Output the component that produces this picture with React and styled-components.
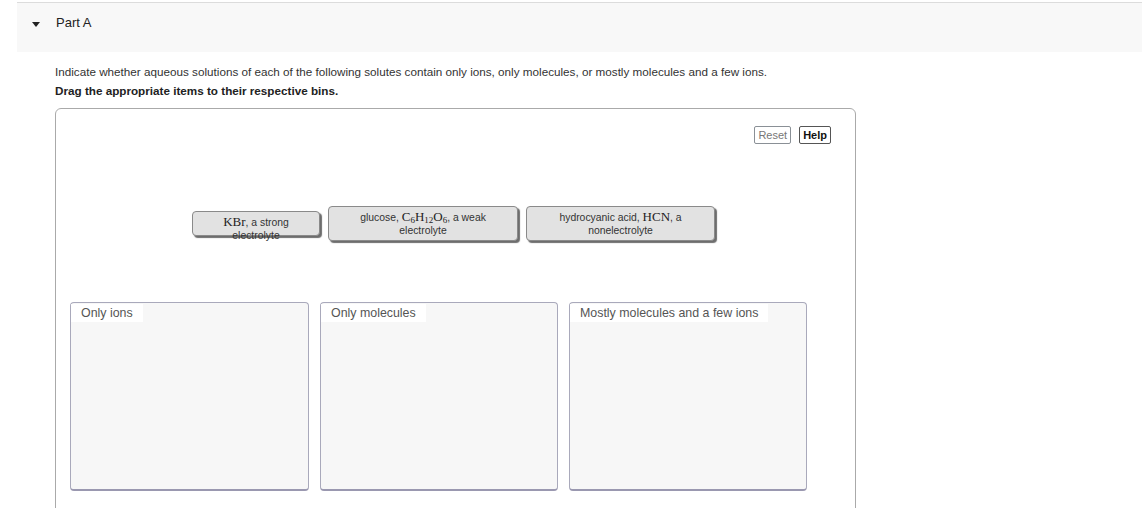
import React from "react";
import styled, { createGlobalStyle } from "styled-components";

const GlobalStyle = createGlobalStyle`
  body {
    margin: 0;
    background: #fff;
    font-family: "Liberation Sans", Arial, sans-serif;
    overflow: hidden;
  }
`;

const Page = styled.div`
  height: 507px;
  overflow: hidden;
  border-bottom: 1px solid #bdb9bd;
  padding-top: 2px;
  box-sizing: content-box;
`;

const Header = styled.div`
  margin-left: 17px;
  height: 50px;
  border-top: 1px solid #dcdcdc;
  background: #f8f8f8;
  display: flex;
  align-items: flex-start;
  padding-top: 12px;
  box-sizing: border-box;
`;

const Caret = styled.span`
  width: 0;
  height: 0;
  margin: 7px 0 0 15px;
  border-left: 4px solid transparent;
  border-right: 4px solid transparent;
  border-top: 5px solid #222;
`;

const Title = styled.h2`
  margin: 0 0 0 16px;
  font-size: 13px;
  font-weight: normal;
  line-height: 16px;
  color: #222;
`;

const Body = styled.div`
  padding: 13px 0 0 55px;
`;

const Text = styled.p`
  margin: 0 0 5px;
  font-size: 11.7px;
  line-height: 14px;
  color: ${(p) => (p.strong ? "#222" : "#333")};
  font-weight: ${(p) => (p.strong ? "bold" : "normal")};
`;

const Board = styled.div`
  margin-top: 10px;
  width: 801px;
  height: 430px;
  box-sizing: border-box;
  border: 1px solid #aaa;
  border-radius: 6px;
  padding: 17px 24px 0 14px;
`;

const Toolbar = styled.div`
  display: flex;
  justify-content: flex-end;
  gap: 8px;
`;

const ToolButton = styled.button`
  height: 18px;
  padding: 0 3px;
  font-family: "Liberation Sans", Arial, sans-serif;
  font-size: 11px;
  line-height: 16px;
  background: #fff;
  border: 1px solid ${(p) => (p.primary ? "#555" : "#8a9096")};
  border-radius: 2px;
  color: ${(p) => (p.primary ? "#111" : "#777")};
  font-weight: ${(p) => (p.primary ? "bold" : "normal")};
`;

const Tray = styled.div`
  display: flex;
  justify-content: center;
  align-items: center;
  gap: 8px;
  margin: 62px 0 0 6px;
  height: 35px;
`;

const Item = styled.div`
  width: ${(p) => p.w}px;
  height: ${(p) => p.h}px;
  box-sizing: border-box;
  padding: 3px 14px 0;
  background: #e2e2e2;
  border: 1px solid #8a8a8a;
  border-radius: 4px;
  box-shadow: 2px 2px 1px #6d6d6d;
  font-size: 10.4px;
  line-height: 13px;
  color: #333;
  text-align: center;
`;

const Math = styled.span`
  font-family: "Liberation Serif", "Times New Roman", serif;
  font-size: 13px;
  color: #222;
`;

const Sub = styled.sub`
  font-size: 9px;
  line-height: 0;
  vertical-align: -2px;
`;

const Bins = styled.div`
  display: flex;
  gap: 11px;
  margin-top: 61px;
`;

const Bin = styled.div`
  width: ${(p) => p.w}px;
  height: 189px;
  box-sizing: border-box;
  background: #f7f7f7;
  border: 1px solid #a9a9bb;
  border-bottom: 2px solid #9a98b0;
  border-radius: 4px;
`;

const BinLabel = styled.span`
  display: inline-block;
  background: #fff;
  padding: 0 10px;
  height: 18px;
  font-size: 12.4px;
  line-height: 18px;
  color: #555;
`;

export default function App() {
  return (
    <>
      <GlobalStyle />
      <Page>
        <Header>
          <Caret />
          <Title>Part A</Title>
        </Header>
        <Body>
          <Text>
            Indicate whether aqueous solutions of each of the following solutes
            contain only ions, only molecules, or mostly molecules and a few ions.
          </Text>
          <Text strong>Drag the appropriate items to their respective bins.</Text>
          <Board>
            <Toolbar>
              <ToolButton>Reset</ToolButton>
              <ToolButton primary>Help</ToolButton>
            </Toolbar>
            <Tray>
              <Item w={128} h={25}>
                <Math>KBr</Math>, a strong electrolyte
              </Item>
              <Item w={190} h={35}>
                glucose,{" "}
                <Math>
                  C<Sub>6</Sub>H<Sub>12</Sub>O<Sub>6</Sub>
                </Math>
                , a weak electrolyte
              </Item>
              <Item w={189} h={35}>
                hydrocyanic acid, <Math>HCN</Math>, a nonelectrolyte
              </Item>
            </Tray>
            <Bins>
              <Bin w={239}>
                <BinLabel>Only ions</BinLabel>
              </Bin>
              <Bin w={238}>
                <BinLabel>Only molecules</BinLabel>
              </Bin>
              <Bin w={238}>
                <BinLabel>Mostly molecules and a few ions</BinLabel>
              </Bin>
            </Bins>
          </Board>
        </Body>
      </Page>
    </>
  );
}
